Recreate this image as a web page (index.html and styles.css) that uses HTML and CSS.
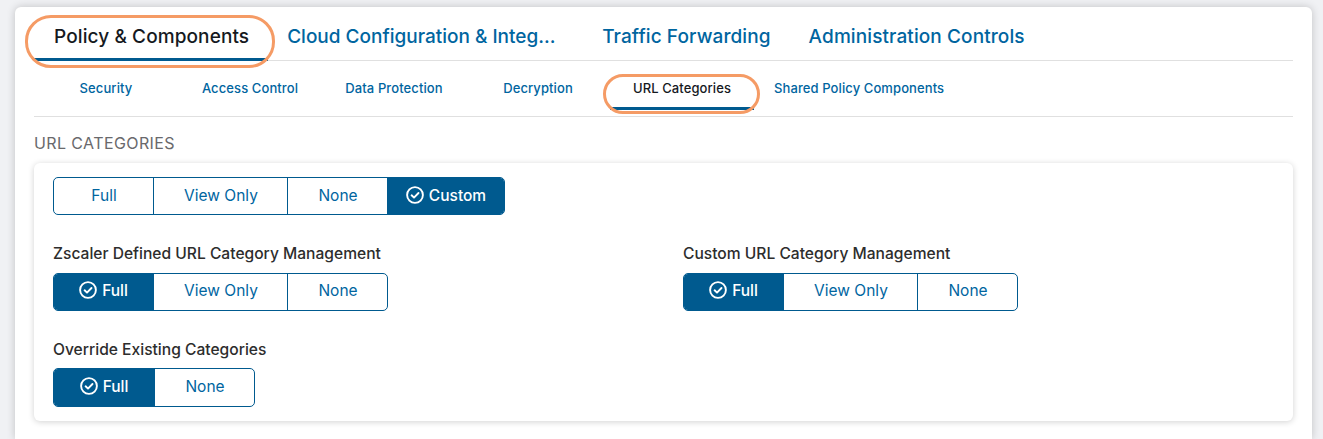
FILE: index.html
```html
<!doctype html>
<html>
  <head>
    <meta charset="utf-8" />
    <link rel="stylesheet" href="styles.css">
  </head>
  <body>
    <svg class="icon-defs" width="0" height="0">
      <symbol id="checkCircle" viewBox="0 0 18 18">
        <circle cx="9" cy="9" r="7.9" fill="none" stroke="currentColor" stroke-width="1.9" />
        <path d="M5.6 9.3l2.4 2.3 4.5-4.6" fill="none" stroke="currentColor" stroke-width="1.9" stroke-linecap="round" stroke-linejoin="round" />
      </symbol>
    </svg>

    <div class="container">
      <div class="main-tabs">
        <div class="main-tab active">
          Policy &amp; Components
          <span class="highlight main-highlight"></span>
        </div>
        <div class="main-tab truncated">Cloud Configuration &amp; Integ...</div>
        <div class="main-tab">Traffic Forwarding</div>
        <div class="main-tab">Administration Controls</div>
      </div>

      <div class="sub-tabs">
        <div class="sub-tab">Security</div>
        <div class="sub-tab">Access Control</div>
        <div class="sub-tab">Data Protection</div>
        <div class="sub-tab">Decryption</div>
        <div class="sub-tab active">
          URL Categories
          <span class="highlight sub-highlight"></span>
        </div>
        <div class="sub-tab">Shared Policy Components</div>
      </div>

      <div class="section-title">URL CATEGORIES</div>

      <div class="panel">
        <div class="button-group top-group">
          <div class="seg seg-full">Full</div>
          <div class="seg seg-view">View Only</div>
          <div class="seg seg-none">None</div>
          <div class="seg seg-custom selected"><svg class="check"><use href="#checkCircle" /></svg>Custom</div>
        </div>

        <div class="field-grid">
          <div class="field">
            <div class="field-label">Zscaler Defined URL Category Management</div>
            <div class="button-group">
              <div class="seg seg-full selected"><svg class="check"><use href="#checkCircle" /></svg>Full</div>
              <div class="seg seg-view">View Only</div>
              <div class="seg seg-none">None</div>
            </div>
          </div>
          <div class="field">
            <div class="field-label">Custom URL Category Management</div>
            <div class="button-group">
              <div class="seg seg-full selected"><svg class="check"><use href="#checkCircle" /></svg>Full</div>
              <div class="seg seg-view">View Only</div>
              <div class="seg seg-none">None</div>
            </div>
          </div>
          <div class="field field-short">
            <div class="field-label">Override Existing Categories</div>
            <div class="button-group">
              <div class="seg seg-full selected"><svg class="check"><use href="#checkCircle" /></svg>Full</div>
              <div class="seg seg-none">None</div>
            </div>
          </div>
        </div>
      </div>
    </div>
  </body>
</html>
```

FILE: styles.css
```css
* {
  margin: 0;
  padding: 0;
  box-sizing: border-box;
}

body {
  height: 100vh;
  padding: 7px 11px 0 15px;
  overflow: hidden;
  font-family: Inter, 'Liberation Sans', sans-serif;
  background: #f0f1f4;
  color: #2a2a2a;
}

.icon-defs {
  position: absolute;
}

.container {
  height: 100%;
  padding: 0 19px;
  background: white;
  border-radius: 6px 6px 0 0;
  box-shadow: 0 0 8px rgba(0, 0, 0, 0.2);
}

.main-tabs {
  display: flex;
  height: 54px;
  border-bottom: 1px solid #e0e0e0;
}

.main-tab {
  position: relative;
  padding: 0 19px;
  height: 54px;
  font-size: 19px;
  font-weight: 500;
  letter-spacing: 0.1px;
  line-height: 59px;
  color: #00659f;
  white-space: nowrap;
}

.main-tab.active {
  padding-left: 20px;
  color: #15191e;
  border-bottom: 3px solid #005a8f;
}

.main-tab.truncated {
  width: 315px;
  letter-spacing: 0;
}

.sub-tabs {
  display: flex;
  height: 56px;
  border-bottom: 1px solid #e0e0e0;
}

.sub-tab {
  position: relative;
  min-width: 144px;
  height: 49px;
  padding: 0 20px;
  font-size: 13px;
  font-weight: 500;
  letter-spacing: 0.1px;
  line-height: 55px;
  text-align: center;
  color: #00659f;
  white-space: nowrap;
}

.sub-tab.active {
  color: #15191e;
  border-bottom: 3px solid #005a8f;
}

.highlight {
  position: absolute;
  border: 3px solid #f59b65;
  pointer-events: none;
}

.main-highlight {
  top: 8px;
  left: -9px;
  width: 250px;
  height: 53px;
  border-radius: 26px;
}

.sub-highlight {
  top: 13px;
  left: -7px;
  width: 157px;
  height: 40px;
  border-radius: 20px;
}

.section-title {
  margin-top: 17px;
  font-size: 16px;
  font-weight: 400;
  line-height: 19px;
  letter-spacing: 0.4px;
  color: #69696c;
}

.panel {
  margin-top: 10px;
  padding-top: 14px;
  height: 258px;
  background: white;
  border-radius: 6px;
  box-shadow: 0 1px 6px rgba(0, 0, 0, 0.18);
}

.button-group {
  display: inline-flex;
  height: 38px;
  border: 1px solid #005a8f;
  border-radius: 5px;
  overflow: hidden;
  vertical-align: top;
}

.top-group {
  display: flex;
  width: 452px;
  margin-left: 19px;
}

.seg {
  display: flex;
  align-items: center;
  justify-content: center;
  gap: 5px;
  padding: 0 0 2px 1px;
  font-size: 15.5px;
  color: #00659f;
  border-left: 1px solid #005a8f;
}

.seg:first-child {
  border-left: none;
}

.seg-full {
  width: 99px;
}

.seg-view {
  width: 134px;
}

.seg-none {
  width: 100px;
}

.seg-custom {
  width: 117px;
}

.seg.selected {
  padding-left: 0;
  background: #005a8f;
  color: white;
  font-weight: 500;
}

.check {
  width: 18px;
  height: 18px;
}

.field-grid {
  display: grid;
  grid-template-columns: 630px 1fr;
  row-gap: 30px;
  margin-top: 30px;
}

.field {
  padding-left: 19px;
}

.field .seg {
  padding-bottom: 4px;
}

.field-label {
  margin-bottom: 10px;
  font-size: 15.6px;
  font-weight: 500;
  line-height: 18px;
  color: #2d2d2d;
}

.field-short .field-label {
  margin-bottom: 9px;
}

.field-short .button-group {
  height: 39px;
}

.field-short .seg {
  padding-bottom: 3px;
}

.field-short .seg-full {
  width: 100px;
}
```
